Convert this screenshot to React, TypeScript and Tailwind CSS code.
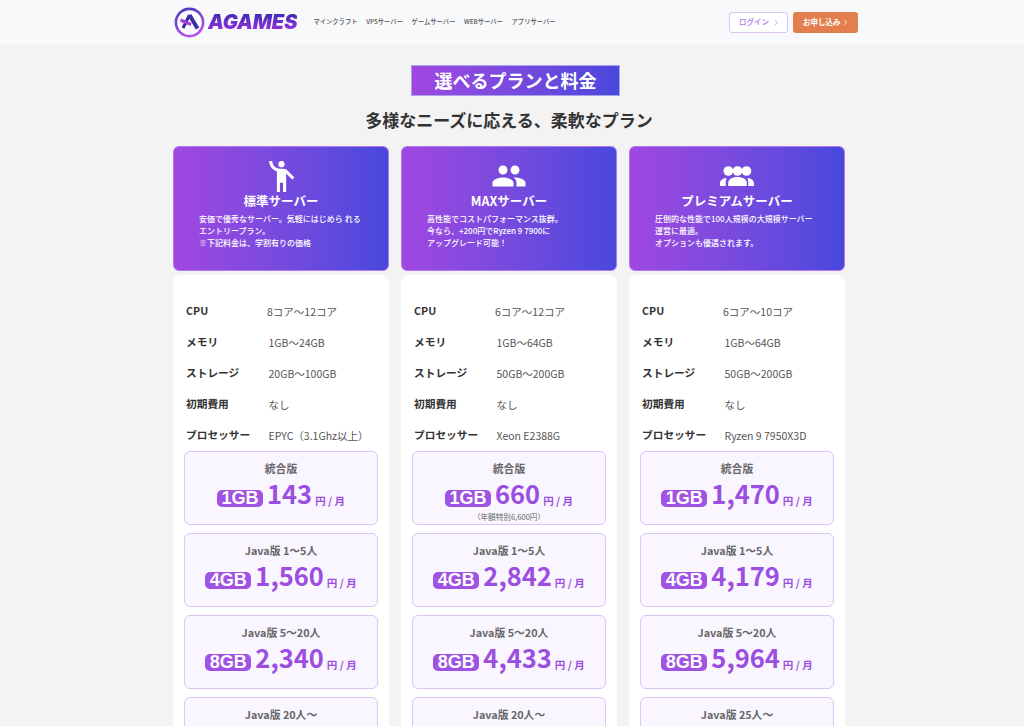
import { MdEmojiPeople, MdPeople } from "react-icons/md";
import { ChevronRight } from "lucide-react";

const jp = { fontFamily: '"Noto Sans CJK JP", "Noto Sans", sans-serif' };

type Price = { title: string; gb: string; price: string; note?: string };
type Plan = {
  icon: React.ReactNode;
  name: string;
  desc: string[];
  specs: string[];
  prices: Price[];
};

const labels = ["CPU", "メモリ", "ストレージ", "初期費用", "プロセッサー"];

function GroupsIcon() {
  return (
    <svg width="34" height="20" viewBox="0 0 34 20" fill="#fff">
      <circle cx="8.3" cy="5" r="4.8" />
      <circle cx="17.5" cy="5" r="4.8" />
      <circle cx="26.5" cy="5" r="4.8" />
      <path d="M8.2 20v-3.2c0-3.6 4-5.9 9.3-5.9s9.3 2.3 9.3 5.9V20z" />
      <path d="M0 20v-2.4c0-3 2.4-5.2 6.6-5.6-.6 1.200-.9 2.600-.9 4.200V20z" />
      <path d="M34 20v-2.400c0-3-2.400-5.200-6.600-5.600.6 1.200.9 2.600.9 4.200V20z" />
    </svg>
  );
}

const plans: Plan[] = [
  {
    icon: <MdEmojiPeople className="shrink-0 text-[37px] text-white" />,
    name: "標準サーバー",
    desc: ["安価で優秀なサーバー。気軽にはじめら れる", "エントリープラン。", "※下記料金は、学割有りの価格"],
    specs: ["8コア〜12コア", "1GB〜24GB", "20GB〜100GB", "なし", "EPYC（3.1Ghz以上）"],
    prices: [
      { title: "統合版", gb: "1GB", price: "143" },
      { title: "Java版 1〜5人", gb: "4GB", price: "1,560" },
      { title: "Java版 5〜20人", gb: "8GB", price: "2,340" },
      { title: "Java版 20人〜", gb: "16GB", price: "3,900" },
    ],
  },
  {
    icon: <MdPeople className="shrink-0 text-[36px] text-white" />,
    name: "MAXサーバー",
    desc: ["高性能でコストパフォーマンス抜群。", "今なら、+200円でRyzen 9 7900に", "アップグレード可能！"],
    specs: ["6コア〜12コア", "1GB〜64GB", "50GB〜200GB", "なし", "Xeon E2388G"],
    prices: [
      { title: "統合版", gb: "1GB", price: "660", note: "（年額特別6,600円）" },
      { title: "Java版 1〜5人", gb: "4GB", price: "2,842" },
      { title: "Java版 5〜20人", gb: "8GB", price: "4,433" },
      { title: "Java版 20人〜", gb: "16GB", price: "7,000" },
    ],
  },
  {
    icon: <GroupsIcon />,
    name: "プレミアムサーバー",
    desc: ["圧倒的な性能で100人規模の大規模サーバー", "運営に最適。", "オプションも優遇されます。"],
    specs: ["6コア〜10コア", "1GB〜64GB", "50GB〜200GB", "なし", "Ryzen 9 7950X3D"],
    prices: [
      { title: "統合版", gb: "1GB", price: "1,470" },
      { title: "Java版 1〜5人", gb: "4GB", price: "4,179" },
      { title: "Java版 5〜20人", gb: "8GB", price: "5,964" },
      { title: "Java版 25人〜", gb: "16GB", price: "9,000" },
    ],
  },
];

function Logo() {
  return (
    <div className="flex items-center gap-[3px]">
      <svg width="31" height="31" viewBox="0 0 31 31" fill="none">
        <defs>
          <linearGradient id="lg" x1="0" y1="0" x2="0.4" y2="1">
            <stop offset="0" stopColor="#3f3db4" />
            <stop offset="1" stopColor="#b44fe8" />
          </linearGradient>
        </defs>
        <circle cx="15.5" cy="15.5" r="13.6" stroke="url(#lg)" strokeWidth="2.6" fill="#fbfaff" />
        <path d="M15.500 8 L9 21" stroke="#2f2a9c" strokeWidth="3" />
        <path d="M15.500 8 L23.500 21.500" stroke="#3a2fa8" strokeWidth="4" />
        <path d="M6.500 13 L17 17.500" stroke="#a63be0" strokeWidth="3" />
      </svg>
      <span
        className="bg-gradient-to-b from-[#3328b0] to-[#a02ee0] bg-clip-text text-[20px] leading-none font-black tracking-[-0.1px] text-transparent italic"
        style={{ fontFamily: '"Inter", sans-serif' }}
      >
        AGAMES
      </span>
    </div>
  );
}

function PriceBox({ p }: { p: Price }) {
  return (
    <div className="relative h-[73.500px] rounded-[6px] border border-[#dcc4f9] bg-[#f9f6ff] pt-[7px] text-center">
      <div className="text-[10.800px] leading-[18px] font-bold text-[#666]">{p.title}</div>
      <div className="flex h-[32px] items-center justify-center text-[#9b4ee0]">
        <span
          className="mt-[11px] rounded-[5px] bg-[#a052e2] px-[4.500px] text-[18px] leading-[17px] font-bold text-white"
          style={{ fontFamily: '"Liberation Sans", sans-serif' }}
        >
          {p.gb}
        </span>
        <span className="ml-[4px] text-[25.500px] leading-[32px] font-bold">{p.price}</span>
        <span className="mt-[16px] ml-[3px] text-[10.500px] leading-[14px] font-bold">円 / 月</span>
      </div>
      {p.note && (
        <div className="absolute right-0 bottom-[1px] left-0 text-[7.600px] leading-[12px] text-[#666]">{p.note}</div>
      )}
    </div>
  );
}

function PlanColumn({ plan }: { plan: Plan }) {
  return (
    <div className="flex w-[216px] flex-col">
      <div className="h-[125px] rounded-[6px] border border-[#b278ee] bg-gradient-to-r from-[#a047e0] to-[#4848dc] text-white">
        <div className="mt-[14px] flex h-[30px] items-center justify-center">{plan.icon}</div>
        <div className="text-center text-[12.500px] leading-[20px] font-bold">{plan.name}</div>
        <div className="mt-[2px] pl-[25px] text-[8px] leading-[12px] font-medium">
          {plan.desc.map((d) => (
            <div key={d}>{d}</div>
          ))}
        </div>
      </div>
      <div className="mt-[4px] flex-1 rounded-t-[8px] bg-white px-[11px] pt-[21px]">
        <div className="flex flex-col">
          {labels.map((l, i) => (
            <div key={l} className="flex h-[31px] items-center pl-[2px] text-[10.700px]">
              <span className={`${i === 0 ? "w-[81px]" : "w-[82.500px]"} font-bold text-[#333]`}>{l}</span>
              <span className="text-[10.500px] text-[#555]">{plan.specs[i]}</span>
            </div>
          ))}
        </div>
        <div className="flex flex-col gap-[8.500px]">
          {plan.prices.map((p) => (
            <PriceBox key={p.title} p={p} />
          ))}
        </div>
      </div>
    </div>
  );
}

export default function App() {
  return (
    <div className="h-[726px] w-[1024px] overflow-hidden bg-[#f3f3f3]" style={jp}>
      <header className="flex h-[44px] items-center bg-[#f8f9fb] pr-[166px] pl-[174px]">
        <Logo />
        <nav className="ml-[16px] flex gap-[8.700px] text-[6.300px] font-medium text-[#555]">
          <span>マインクラフト</span>
          <span>VPSサーバー</span>
          <span>ゲームサーバー</span>
          <span>WEBサーバー</span>
          <span>アプリサーバー</span>
        </nav>
        <div className="ml-auto flex gap-[5px]">
          <div className="flex h-[21px] w-[59px] items-center gap-[3px] rounded-[3px] border border-[#d9c2f7] bg-white pl-[9px] text-[7.500px] font-bold text-[#b98cf0]">
            ログイン
            <ChevronRight size={9} strokeWidth={2} />
          </div>
          <div className="flex h-[21px] w-[65px] items-center rounded-[3px] bg-[#e37f4e] pl-[10px] text-[7.500px] font-bold text-white">
            お申し込み
            <ChevronRight size={9} strokeWidth={2} />
          </div>
        </div>
      </header>
      <main className="ml-[173px] flex w-[672px] flex-col items-center">
        <h2 className="mt-[21px] ml-[13px] flex h-[31px] w-[209px] items-center justify-center border border-[#a9a3ee] bg-gradient-to-r from-[#a047e0] to-[#4848dc] text-[18px] font-bold text-white">
          選べるプランと料金
        </h2>
        <h3 className="mt-[13px] text-[17px] leading-[22px] font-bold text-[#333]">多様なニーズに応える、柔軟なプラン</h3>
        <div className="mt-[15px] flex w-full justify-between">
          {plans.map((p) => (
            <PlanColumn key={p.name} plan={p} />
          ))}
        </div>
      </main>
    </div>
  );
}
